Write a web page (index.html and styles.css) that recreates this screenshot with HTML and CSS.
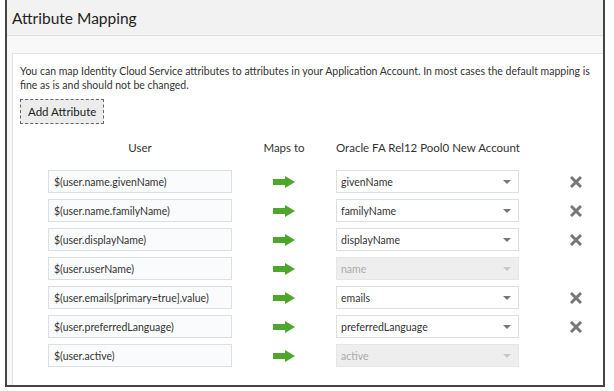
FILE: index.html
```html
<!DOCTYPE html>
<html lang="en">

<head>
  <meta charset="UTF-8">
  <title>Attribute Mapping</title>
  <link rel="stylesheet" href="styles.css">
</head>

<body>
  <div class="frame">
    <header class="page-head">
      <h1>Attribute Mapping</h1>
    </header>

    <div class="page-body">
      <section class="panel">
        <p class="intro">You can map Identity Cloud Service attributes to attributes in your Application Account. In most cases the default mapping is fine as is and should not be changed.</p>
        <button class="btn">Add Attribute</button>

        <div class="mapping">
          <div class="col-head">User</div>
          <div class="col-head center">Maps to</div>
          <div class="col-head left">Oracle FA Rel12 Pool0 New Account</div>
          <div></div>

          <div class="field">$(user.name.givenName)</div>
          <div class="arrow"><svg width="22" height="12" viewBox="0 0 22 12"><path d="M0 3h12V0l10 6-10 6V9H0z" fill="#4fa62c"/></svg></div>
          <div class="select">givenName<span class="caret"></span></div>
          <div class="remove"><svg width="12" height="12" viewBox="0 0 12 12"><path d="M1 1l10 10M11 1L1 11" stroke="#777" stroke-width="3"/></svg></div>

          <div class="field">$(user.name.familyName)</div>
          <div class="arrow"><svg width="22" height="12" viewBox="0 0 22 12"><path d="M0 3h12V0l10 6-10 6V9H0z" fill="#4fa62c"/></svg></div>
          <div class="select">familyName<span class="caret"></span></div>
          <div class="remove"><svg width="12" height="12" viewBox="0 0 12 12"><path d="M1 1l10 10M11 1L1 11" stroke="#777" stroke-width="3"/></svg></div>

          <div class="field">$(user.displayName)</div>
          <div class="arrow"><svg width="22" height="12" viewBox="0 0 22 12"><path d="M0 3h12V0l10 6-10 6V9H0z" fill="#4fa62c"/></svg></div>
          <div class="select">displayName<span class="caret"></span></div>
          <div class="remove"><svg width="12" height="12" viewBox="0 0 12 12"><path d="M1 1l10 10M11 1L1 11" stroke="#777" stroke-width="3"/></svg></div>

          <div class="field">$(user.userName)</div>
          <div class="arrow"><svg width="22" height="12" viewBox="0 0 22 12"><path d="M0 3h12V0l10 6-10 6V9H0z" fill="#4fa62c"/></svg></div>
          <div class="select disabled">name<span class="caret"></span></div>
          <div></div>

          <div class="field">$(user.emails[primary=true].value)</div>
          <div class="arrow"><svg width="22" height="12" viewBox="0 0 22 12"><path d="M0 3h12V0l10 6-10 6V9H0z" fill="#4fa62c"/></svg></div>
          <div class="select">emails<span class="caret"></span></div>
          <div class="remove"><svg width="12" height="12" viewBox="0 0 12 12"><path d="M1 1l10 10M11 1L1 11" stroke="#777" stroke-width="3"/></svg></div>

          <div class="field">$(user.preferredLanguage)</div>
          <div class="arrow"><svg width="22" height="12" viewBox="0 0 22 12"><path d="M0 3h12V0l10 6-10 6V9H0z" fill="#4fa62c"/></svg></div>
          <div class="select">preferredLanguage<span class="caret"></span></div>
          <div class="remove"><svg width="12" height="12" viewBox="0 0 12 12"><path d="M1 1l10 10M11 1L1 11" stroke="#777" stroke-width="3"/></svg></div>

          <div class="field">$(user.active)</div>
          <div class="arrow"><svg width="22" height="12" viewBox="0 0 22 12"><path d="M0 3h12V0l10 6-10 6V9H0z" fill="#4fa62c"/></svg></div>
          <div class="select disabled">active<span class="caret"></span></div>
          <div></div>
        </div>
      </section>
    </div>
  </div>
</body>

</html>
```

FILE: styles.css
```css
body {
  margin: 0;
  padding: 0;
  background-color: white;
  font-family: Lato, "Open Sans", sans-serif;
  color: #333;
}

.frame {
  margin-left: 5px;
  width: 596px;
  height: 385px;
  border: 2px solid #444;
  border-top: none;
  overflow: hidden;
  background-color: #f8f8f8;
}

.page-head {
  height: 35px;
  background-color: #f2f2f2;
  border-bottom: 1px solid #dcdfe2;
  display: flex;
  align-items: center;
  padding-left: 5px;
}

.page-head h1 {
  margin: 0;
  font-size: 15.5px;
  font-weight: normal;
  color: #222;
}

.page-body {
  padding: 17px 0 0 5px;
}

.panel {
  width: 640px;
  height: 340px;
  background-color: white;
  border-left: 1px solid #e2e2e2;
  border-top: 1px solid #e2e2e2;
  padding: 10px 0 0 7px;
}

.intro {
  margin: 0;
  width: 578px;
  font-size: 10.5px;
  line-height: 14px;
}

.btn {
  margin-top: 7px;
  height: 25px;
  padding: 0 7px;
  font-family: inherit;
  font-size: 11.5px;
  color: #222;
  background-color: #ececec;
  border: 1px dashed #666;
}

.mapping {
  display: grid;
  grid-template-columns: 184px 104px 183px 114px;
  grid-auto-rows: 23px;
  row-gap: 6px;
  margin: 17px 0 0 28px;
  font-size: 10.5px;
}

.col-head {
  text-align: center;
  font-size: 11.5px;
  line-height: 14px;
  white-space: nowrap;
  margin-bottom: -6px;
}

.col-head.left {
  text-align: left;
}

.field,
.select {
  border: 1px solid #dde0e3;
  display: flex;
  align-items: center;
  padding-left: 5px;
}

.field {
  background-color: #fafbfc;
}

.select {
  background-color: white;
  padding-left: 4px;
  position: relative;
}

.select.disabled {
  background-color: #eeeeee;
  border-color: #e6e6e6;
  color: #aaa;
}

.caret {
  position: absolute;
  right: 7px;
  top: 9px;
  border-left: 4px solid transparent;
  border-right: 4px solid transparent;
  border-top: 4px solid #777;
}

.select.disabled .caret {
  border-top-color: #c6c6c6;
}

.arrow,
.remove {
  display: flex;
  align-items: center;
  justify-content: center;
}
```
